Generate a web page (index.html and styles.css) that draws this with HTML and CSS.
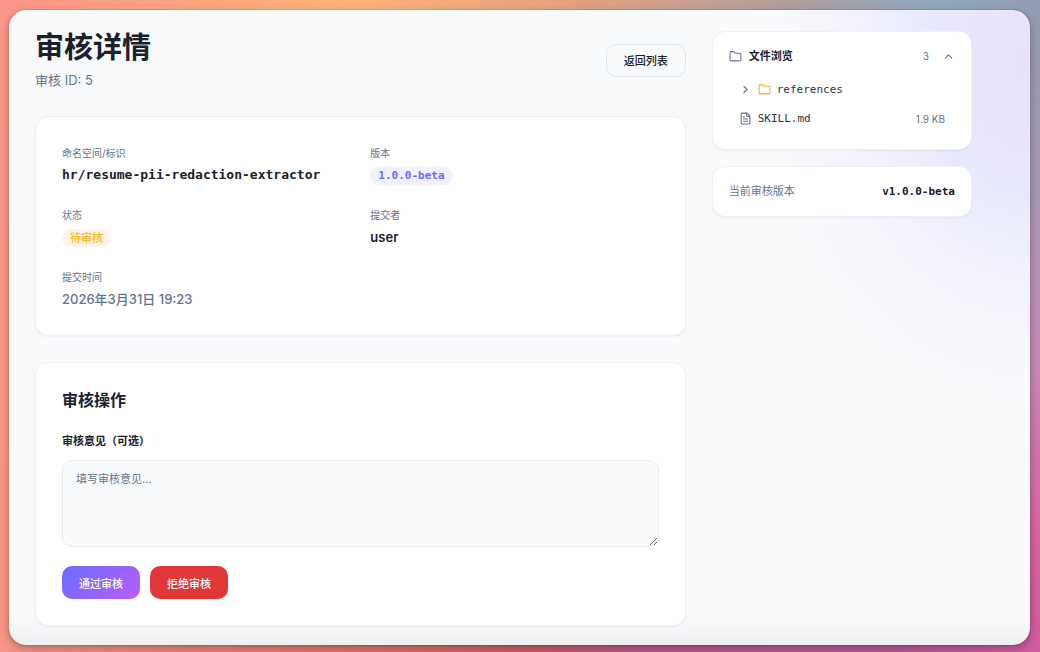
FILE: index.html
```html
<!DOCTYPE html>
<html lang="zh-CN">
<head>
  <meta charset="UTF-8">
  <meta name="viewport" content="width=device-width, initial-scale=1.0">
  <title>审核详情</title>
  <link rel="stylesheet" href="styles.css">
</head>
<body>
<div class="window">
  <main class="main">
    <header class="page-header">
      <div>
        <h1>审核详情</h1>
        <p class="subtitle">审核 ID: 5</p>
      </div>
      <button type="button" class="btn btn-outline">返回列表</button>
    </header>

    <section class="card">
      <dl class="details">
        <div>
          <dt>命名空间/标识</dt>
          <dd class="mono">hr/resume-pii-redaction-extractor</dd>
        </div>
        <div>
          <dt>版本</dt>
          <dd><span class="badge badge-version">1.0.0-beta</span></dd>
        </div>
        <div>
          <dt>状态</dt>
          <dd><span class="badge badge-pending">待审核</span></dd>
        </div>
        <div>
          <dt>提交者</dt>
          <dd>user</dd>
        </div>
        <div>
          <dt>提交时间</dt>
          <dd class="date">2026年3月31日 19:23</dd>
        </div>
      </dl>
    </section>

    <section class="card">
      <h2>审核操作</h2>
      <form>
        <label for="comment">审核意见（可选）</label>
        <textarea id="comment" placeholder="填写审核意见..."></textarea>
        <div class="actions">
          <button type="button" class="btn btn-approve">通过审核</button>
          <button type="button" class="btn btn-reject">拒绝审核</button>
        </div>
      </form>
    </section>
  </main>

  <aside class="sidebar">
    <section class="side-card">
      <div class="files-header">
        <svg class="icon" viewBox="0 0 24 24"><path d="M20 20a2 2 0 0 0 2-2V8a2 2 0 0 0-2-2h-7.9a2 2 0 0 1-1.69-.9L9.6 3.9A2 2 0 0 0 7.93 3H4a2 2 0 0 0-2 2v13a2 2 0 0 0 2 2Z"/></svg>
        <h3>文件浏览</h3>
        <span class="count">3</span>
        <button type="button" class="toggle" aria-label="收起">
          <svg class="icon" viewBox="0 0 24 24"><path d="m18 15-6-6-6 6"/></svg>
        </button>
      </div>
      <ul class="tree">
        <li>
          <svg class="icon" viewBox="0 0 24 24"><path d="m9 18 6-6-6-6"/></svg>
          <svg class="icon icon-folder" viewBox="0 0 24 24"><path d="M20 20a2 2 0 0 0 2-2V8a2 2 0 0 0-2-2h-7.9a2 2 0 0 1-1.69-.9L9.6 3.9A2 2 0 0 0 7.93 3H4a2 2 0 0 0-2 2v13a2 2 0 0 0 2 2Z"/></svg>
          <span class="file-name">references</span>
        </li>
        <li>
          <svg class="icon" viewBox="0 0 24 24"><path d="M15 2H6a2 2 0 0 0-2 2v16a2 2 0 0 0 2 2h12a2 2 0 0 0 2-2V7Z"/><path d="M14 2v4a2 2 0 0 0 2 2h4M10 9H8M16 13H8M16 17H8"/></svg>
          <span class="file-name">SKILL.md</span>
          <span class="file-size">1.9 KB</span>
        </li>
      </ul>
    </section>

    <section class="side-card current-version">
      <span>当前审核版本</span>
      <strong>v1.0.0-beta</strong>
    </section>
  </aside>
</div>
</body>
</html>
```
FILE: styles.css
```css
* {
  box-sizing: border-box;
}
body {
  margin: 0;
  min-height: 100vh;
  padding: 10px 10px 7px 9px;
  display: flex;
  font-family: Inter, "Noto Sans CJK SC", sans-serif;
  font-size: 13px;
  color: #1a202c;
  background:
    linear-gradient(to bottom, #949cb2, #a898b4 30%, #c78bb4 55%, #d8609a 85%, #cf5c9c) right / 10px 100% no-repeat,
    linear-gradient(to bottom, #fc9588, #f69585) left / 9px 100% no-repeat,
    linear-gradient(to right, #f69585, #e2776a 30%, #c95a66 52%, #b8558e 62%, #b75894 85%, #cf5c9c) bottom / 100% 30px no-repeat,
    linear-gradient(to right, #fc9588, #fdb377 34%, #e5a07f 55%, #b39e9c 75%, #8fa8bf 90%, #949cb2);
}
h1, h2, h3, p, dl, dd, ul {
  margin: 0;
  padding: 0;
}
.window {
  flex: 1;
  display: grid;
  grid-template-columns: minmax(0, 5fr) minmax(0, 2fr);
  align-items: start;
  gap: 26px;
  padding: 21px 58px 19px 26px;
  border-radius: 17px;
  background:
    linear-gradient(to top, #eeeff0, rgba(249, 250, 252, 0) 26px),
    radial-gradient(ellipse 260px 330px at 100% 8%, #e8e1fb, #e8e8fc 38%, #f3f4fb 72%, rgba(249, 250, 252, 0)),
    #f9fafc;
  box-shadow: 0 0 1px rgba(0, 0, 0, 0.5), 0 3px 8px rgba(0, 0, 0, 0.28);
}

/* main column */
.page-header {
  display: flex;
  justify-content: space-between;
  align-items: center;
  margin-bottom: 27px;
}
h1 {
  font-size: 29px;
  line-height: 34px;
  font-weight: 700;
}
.subtitle {
  margin-top: 6px;
  line-height: 18px;
  color: #64748b;
}
.card, .side-card {
  background-color: #fff;
  border: 1px solid #edf0f5;
  border-radius: 13px;
  box-shadow: 0 1px 2px rgba(15, 23, 42, 0.05);
}
.card {
  padding: 26px;
}
.card + .card {
  margin-top: 26px;
}
.details {
  display: grid;
  grid-template-columns: 1fr 1fr;
  gap: 20px;
}
dt {
  font-size: 10px;
  line-height: 20px;
  color: #64748b;
}
dd {
  display: flex;
  align-items: flex-end;
  height: 22px;
  line-height: 20px;
  font-weight: 600;
}
.mono, .badge-version, .file-name, .current-version strong {
  font-family: "DejaVu Sans Mono", "Liberation Mono", monospace;
}
.mono {
  font-weight: 700;
}
.date {
  font-weight: 500;
  color: #64748b;
}
.badge {
  padding: 0 8px;
  border-radius: 9px;
  font-size: 11px;
  line-height: 18px;
}
.badge-version {
  color: #6a6dff;
  background-color: #f0f0ff;
  font-weight: 700;
}
.badge-pending {
  color: #fbb724;
  background-color: #fff4e8;
  font-weight: 500;
}
h2 {
  font-size: 16px;
  line-height: 22px;
}
label {
  display: block;
  margin: 22px 0 11px;
  font-size: 11px;
  line-height: 16px;
  font-weight: 600;
}
textarea {
  display: block;
  width: 100%;
  height: 87px;
  padding: 10px 13px;
  border: 1px solid #e8ebf2;
  border-radius: 10px;
  background-color: #f9fafc;
  font-family: inherit;
  font-size: 11px;
  line-height: 16px;
  resize: vertical;
}
textarea::placeholder {
  color: #64748b;
}
.actions {
  display: flex;
  gap: 10px;
  margin-top: 19px;
}
.btn {
  height: 33px;
  padding: 0 17px;
  border: 0;
  border-radius: 10px;
  font-family: inherit;
  font-size: 11px;
  font-weight: 500;
  color: #fff;
}
.btn-outline {
  border: 1px solid #e2e6ee;
  background-color: transparent;
  color: #1a202c;
}
.btn-approve {
  background-image: linear-gradient(135deg, #6a6dff, #b95cff);
}
.btn-reject {
  background-color: #e03838;
}

/* sidebar */
.sidebar {
  display: grid;
  gap: 16px;
}
.side-card {
  padding: 16px;
}
.icon {
  flex: none;
  width: 13px;
  height: 13px;
  fill: none;
  stroke: #64748b;
  stroke-width: 2;
  stroke-linecap: round;
  stroke-linejoin: round;
}
.icon-folder {
  stroke: #f6a83c;
}
.files-header {
  display: flex;
  align-items: center;
  gap: 7px;
  height: 16px;
  margin-bottom: 11px;
}
h3 {
  flex: 1;
  font-size: 11px;
  line-height: 16px;
}
.count, .file-size {
  font-size: 10px;
  color: #64748b;
}
.toggle {
  display: flex;
  margin-left: 6px;
  padding: 0;
  border: 0;
  background: none;
}
.tree {
  list-style: none;
}
.tree li {
  display: flex;
  align-items: center;
  gap: 6px;
  height: 29px;
  padding: 0 10px;
}
.file-name {
  font-size: 11px;
  color: #2d3442;
}
.file-size {
  margin-left: auto;
}
.current-version {
  display: flex;
  justify-content: space-between;
  align-items: center;
  font-size: 11px;
  line-height: 17px;
  color: #64748b;
}
.current-version strong {
  color: #1a202c;
}
```
